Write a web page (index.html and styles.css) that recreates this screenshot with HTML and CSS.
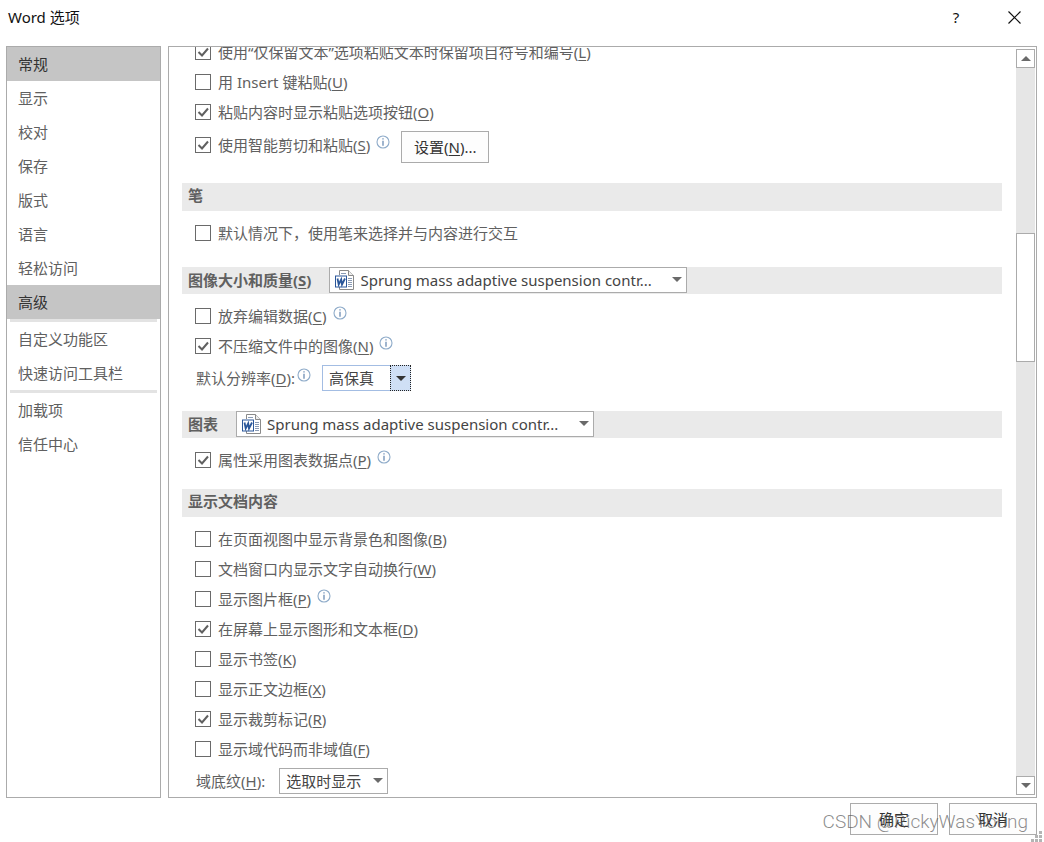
FILE: index.html
```html
<!DOCTYPE html>
<html lang="zh-CN">
<head>
    <meta charset="UTF-8">
    <meta name="viewport" content="width=device-width, initial-scale=1.0">
    <title>Word 选项</title>
    <link rel="stylesheet" href="styles.css">
</head>
<body>
    <svg class="sprite" aria-hidden="true">
        <symbol id="info" viewBox="0 0 14 14">
            <circle cx="7" cy="7" r="6" fill="#fff" stroke="#8eabc9" stroke-width="1.1"/>
            <path d="M7 3.2v1.4M7 5.8v5" stroke="#5f83ad" stroke-width="1.2"/>
        </symbol>
        <symbol id="doc" viewBox="0 0 20 20">
            <path d="M4.5 5V.5h9l5 5v14h-14V17" fill="#fff" stroke="#8a8a8a"/>
            <path d="M13.5.5v5h5" fill="#eee" stroke="#8a8a8a"/>
            <path d="M13 8.5h4M13 10.5h4M13 12.5h4M13 14.5h4M13 16.5h4M6 3.5h5" stroke="#8a9bb5"/>
            <path d="M0 5.5h12v12H0z" fill="#2b579a"/>
            <path d="M1 6.5h10v10H1z" fill="#fff"/>
            <path d="M2.5 8.5l1.2 6L6.2 9.5l.8 5 3-6" fill="none" stroke="#2b579a" stroke-width="1.8"/>
        </symbol>
    </svg>

    <header class="titlebar">
        <h1>Word 选项</h1>
        <button class="title-btn" type="button" aria-label="帮助">?</button>
        <button class="title-btn" type="button" aria-label="关闭">
            <svg width="13" height="13" viewBox="0 0 13 13"><path d="M.5.5l12 12M12.5.5l-12 12" stroke="#111" stroke-width="1.2"/></svg>
        </button>
    </header>

    <main class="main">
        <nav class="sidebar">
            <a class="active" href="#">常规</a>
            <a href="#">显示</a>
            <a href="#">校对</a>
            <a href="#">保存</a>
            <a href="#">版式</a>
            <a href="#">语言</a>
            <a href="#">轻松访问</a>
            <a class="active" href="#">高级</a>
            <hr>
            <a href="#">自定义功能区</a>
            <a href="#">快速访问工具栏</a>
            <hr>
            <a href="#">加载项</a>
            <a href="#">信任中心</a>
        </nav>

        <div class="panel">
            <div class="content">
                <section class="group group-scrolled">
                    <div class="row"><label><input type="checkbox" checked><span>使用“仅保留文本”选项粘贴文本时保留项目符号和编号(<u>L</u>)</span></label></div>
                    <div class="row"><label><input type="checkbox"><span>用 Insert 键粘贴(<u>U</u>)</span></label></div>
                    <div class="row"><label><input type="checkbox" checked><span>粘贴内容时显示粘贴选项按钮(<u>O</u>)</span></label></div>
                    <div class="row row-button">
                        <label><input type="checkbox" checked><span>使用智能剪切和粘贴(<u>S</u>)</span></label>
                        <svg class="info"><use href="#info"/></svg>
                        <button class="btn" type="button"><span>设置(<u>N</u>)...</span></button>
                    </div>
                </section>

                <section class="group group-loose">
                    <h2 class="bar">笔</h2>
                    <div class="row"><label><input type="checkbox"><span>默认情况下，使用笔来选择并与内容进行交互</span></label></div>
                </section>

                <section class="group">
                    <div class="bar bar-select">
                        <h2><label for="imgdoc">图像大小和质量(<u>S</u>)</label></h2>
                        <div class="combo combo-doc">
                            <svg class="doc"><use href="#doc"/></svg>
                            <select id="imgdoc"><option>Sprung mass adaptive suspension contr...</option></select>
                        </div>
                    </div>
                    <div class="row">
                        <label><input type="checkbox"><span>放弃编辑数据(<u>C</u>)</span></label>
                        <svg class="info"><use href="#info"/></svg>
                    </div>
                    <div class="row">
                        <label><input type="checkbox" checked><span>不压缩文件中的图像(<u>N</u>)</span></label>
                        <svg class="info"><use href="#info"/></svg>
                    </div>
                    <div class="row row-select">
                        <label for="dpi">默认分辨率(<u>D</u>):</label>
                        <svg class="info info-close"><use href="#info"/></svg>
                        <div class="combo combo-focus">
                            <select id="dpi"><option>高保真</option></select>
                        </div>
                    </div>
                </section>

                <section class="group group-tight">
                    <div class="bar bar-select">
                        <h2><label for="chartdoc">图表</label></h2>
                        <div class="combo combo-doc">
                            <svg class="doc"><use href="#doc"/></svg>
                            <select id="chartdoc"><option>Sprung mass adaptive suspension contr...</option></select>
                        </div>
                    </div>
                    <div class="row">
                        <label><input type="checkbox" checked><span>属性采用图表数据点(<u>P</u>)</span></label>
                        <svg class="info"><use href="#info"/></svg>
                    </div>
                </section>

                <section class="group">
                    <h2 class="bar">显示文档内容</h2>
                    <div class="row"><label><input type="checkbox"><span>在页面视图中显示背景色和图像(<u>B</u>)</span></label></div>
                    <div class="row"><label><input type="checkbox"><span>文档窗口内显示文字自动换行(<u>W</u>)</span></label></div>
                    <div class="row">
                        <label><input type="checkbox"><span>显示图片框(<u>P</u>)</span></label>
                        <svg class="info"><use href="#info"/></svg>
                    </div>
                    <div class="row"><label><input type="checkbox" checked><span>在屏幕上显示图形和文本框(<u>D</u>)</span></label></div>
                    <div class="row"><label><input type="checkbox"><span>显示书签(<u>K</u>)</span></label></div>
                    <div class="row"><label><input type="checkbox"><span>显示正文边框(<u>X</u>)</span></label></div>
                    <div class="row"><label><input type="checkbox" checked><span>显示裁剪标记(<u>R</u>)</span></label></div>
                    <div class="row"><label><input type="checkbox"><span>显示域代码而非域值(<u>F</u>)</span></label></div>
                    <div class="row row-select">
                        <label for="shading">域底纹(<u>H</u>):</label>
                        <div class="combo combo-shading">
                            <select id="shading"><option>选取时显示</option></select>
                        </div>
                    </div>
                </section>
            </div>

            <div class="scrollbar">
                <button type="button" aria-label="向上滚动"><svg width="10" height="5"><path d="M0 5L5 0l5 5z" fill="#6a6a6a"/></svg></button>
                <div class="track"><div class="thumb"></div></div>
                <button type="button" aria-label="向下滚动"><svg width="10" height="5"><path d="M0 0l5 5 5-5z" fill="#6a6a6a"/></svg></button>
            </div>
        </div>
    </main>

    <footer class="footer">
        <button class="btn" type="button">确定</button>
        <button class="btn" type="button">取消</button>
    </footer>

    <div class="watermark">CSDN @RickyWasYoung</div>
    <svg class="grip" width="11" height="11" viewBox="0 0 11 11"><path d="M8 0h3v3H8zM4 4h3v3H4zM8 4h3v3H8zM0 8h3v3H0zM4 8h3v3H4zM8 8h3v3H8z" fill="#b4b4b4"/></svg>
</body>
</html>
```
FILE: styles.css
```css
*, *::after {
    box-sizing: border-box;
}
body {
    margin: 0;
    height: 100vh;
    display: flex;
    flex-direction: column;
    position: relative;
    overflow: hidden;
    background: #fff;
    color: #606060;
    font-family: "Noto Sans", "Noto Sans CJK SC", sans-serif;
    font-size: 15px;
    line-height: 20px;
}
button, select, input {
    font: inherit;
    color: inherit;
    margin: 0;
}
u {
    text-underline-offset: 2px;
    text-decoration-thickness: 1px;
}
.sprite {
    display: none;
}

/* title bar */
.titlebar {
    display: flex;
    align-items: center;
    height: 46px;
    padding: 0 1px 12px 8px;
    color: #111;
}
.titlebar h1 {
    flex: 1;
    margin: 0;
    font-size: 15px;
    font-weight: normal;
}
.title-btn {
    display: flex;
    align-items: center;
    justify-content: center;
    width: 58px;
    height: 34px;
    padding: 0;
    border: 0;
    background: none;
}

.main {
    flex: 1;
    min-height: 0;
    display: flex;
    gap: 7px;
    padding: 0 7px 0 6px;
}

/* left menu */
.sidebar {
    width: 155px;
    border: 1px solid #ababab;
}
.sidebar a {
    display: block;
    padding: 7px 11px;
    color: #606060;
    text-decoration: none;
}
.sidebar a.active {
    background: #c5c5c5;
    color: #333;
}
.sidebar hr {
    height: 3px;
    margin: 0 3px;
    border: 0;
    background: #e3e3e3;
}

/* right panel */
.panel {
    flex: 1;
    min-width: 0;
    display: flex;
    border: 1px solid #ababab;
    padding-right: 1px;
}
.content {
    flex: 1;
    min-width: 0;
    overflow: hidden;
    padding: 0 14px 0 13px;
}
.group {
    margin-bottom: 16px;
}
.group-scrolled {
    margin-top: -10px;
}
.group-loose {
    margin-bottom: 19px;
}
.group-tight {
    margin-bottom: 14px;
}
.bar {
    display: flex;
    align-items: center;
    height: 28px;
    margin: 0 0 7px;
    padding: 0 6px 4px;
    background: #eaeaea;
}
.bar, .bar h2 {
    font-size: 15px;
    font-weight: bold;
}
.bar h2 {
    margin: 0;
}
.bar-select {
    gap: 18px;
    height: 27px;
    padding-bottom: 1px;
}
.row {
    display: flex;
    align-items: center;
    height: 30px;
    padding-left: 13px;
}
.row label {
    display: flex;
    align-items: center;
    white-space: nowrap;
}
.row label span {
    margin-left: 7px;
}
.row-button {
    height: 40px;
}
.row-button label {
    padding-bottom: 4px;
}
.row-button .btn {
    margin-left: 11px;
}
.row-select {
    height: 34px;
    padding-left: 14px;
}
.info {
    width: 14px;
    height: 14px;
    margin: 0 0 6px 6px;
}
.row-button .info {
    margin-bottom: 10px;
}
.info-close {
    margin-left: 2px;
}
input[type="checkbox"] {
    appearance: none;
    width: 16px;
    height: 16px;
    border: 1px solid #6a6a6a;
    background: #fff;
}
input[type="checkbox"]:checked {
    background: #fff url("data:image/svg+xml,%3Csvg xmlns='http://www.w3.org/2000/svg' width='14' height='14'%3E%3Cpath d='M2.5 7l3.5 3.5L12 3.5' fill='none' stroke='%23606060' stroke-width='2'/%3E%3C/svg%3E") center no-repeat;
}

/* drop-downs */
.combo {
    position: relative;
    height: 26px;
}
.combo select {
    appearance: none;
    display: block;
    width: 100%;
    height: 100%;
    padding: 0 22px 0 6px;
    border: 1px solid #ababab;
    border-radius: 0;
    color: #444;
    font-weight: normal;
    background: #fff url("data:image/svg+xml,%3Csvg xmlns='http://www.w3.org/2000/svg' width='10' height='5'%3E%3Cpath d='M0 0h10L5 5z' fill='%236a6a6a'/%3E%3C/svg%3E") right 4px top 9px no-repeat;
}
.combo-doc {
    width: 358px;
}
.combo-doc select {
    padding-left: 30px;
}
.doc {
    position: absolute;
    left: 6px;
    top: 3px;
    width: 20px;
    height: 20px;
}
.combo-focus {
    width: 89px;
    margin-left: 11px;
}
.combo-focus select {
    border-color: #a3bde3;
}
.combo-focus::after {
    content: "";
    position: absolute;
    top: 0;
    right: 0;
    width: 21px;
    height: 26px;
    border: 1px dotted #222;
    background: #cfdff5 url("data:image/svg+xml,%3Csvg xmlns='http://www.w3.org/2000/svg' width='10' height='5'%3E%3Cpath d='M0 0h10L5 5z' fill='%23333'/%3E%3C/svg%3E") center no-repeat;
    pointer-events: none;
}
.combo-shading {
    width: 109px;
    margin-left: 14px;
}

.btn {
    width: 88px;
    height: 32px;
    padding: 0;
    border: 1px solid #ababab;
    background: #fdfdfd;
    color: #333;
}

/* scroll bar */
.scrollbar {
    display: flex;
    flex-direction: column;
    width: 19px;
    padding: 2px 0;
}
.scrollbar button {
    display: flex;
    align-items: center;
    justify-content: center;
    width: 19px;
    height: 19px;
    padding: 0;
    border: 1px solid #ababab;
    background: #fff;
}
.track {
    flex: 1;
    display: grid;
    grid-template-rows: 165fr 129fr 414fr;
    background: #e6e6e6;
}
.thumb {
    grid-row: 2;
    border: 1px solid #ababab;
    background: #fff;
}

.footer {
    display: flex;
    justify-content: flex-end;
    gap: 11px;
    height: 44px;
    padding: 5px 7px 0 0;
}
.watermark {
    position: absolute;
    right: 16px;
    bottom: 8px;
    font-family: Roboto, sans-serif;
    font-size: 19px;
    font-weight: 300;
    line-height: 24px;
    color: rgba(90, 90, 90, 0.7);
    pointer-events: none;
}
.grip {
    position: absolute;
    right: 2px;
    bottom: 0;
}
```
